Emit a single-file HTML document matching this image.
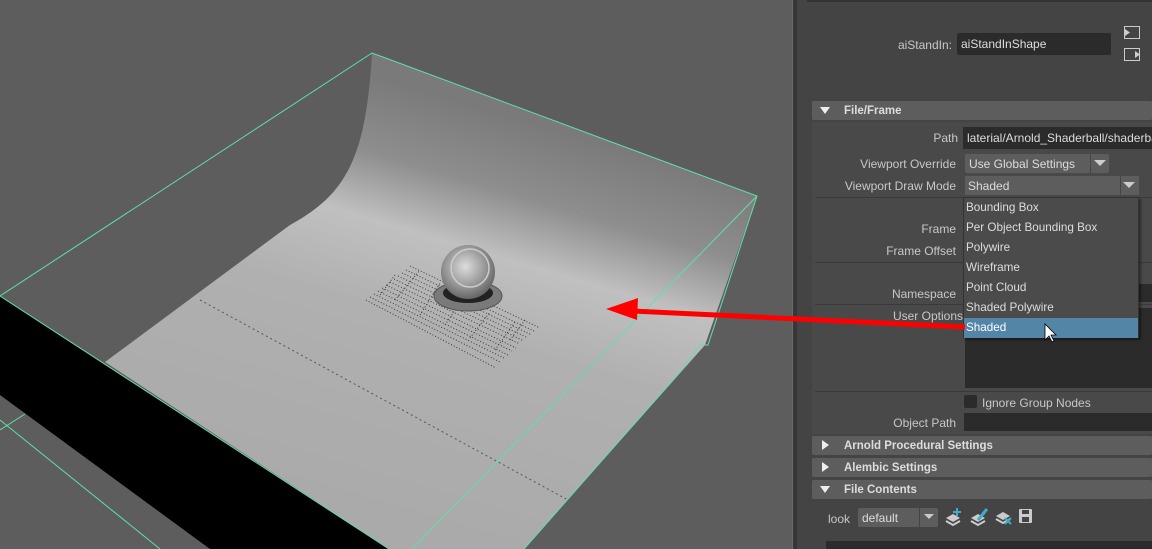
<!DOCTYPE html>
<html><head><style>
*{margin:0;padding:0;box-sizing:border-box}
body{width:1152px;height:549px;overflow:hidden;background:#444;font-family:"Liberation Sans",sans-serif;font-size:12px;color:#ccc;position:relative}
.a{position:absolute}
.lbl{position:absolute;text-align:right;color:#c8c8c8;font-size:12px}
.fld{position:absolute;background:#2b2b2b;color:#ddd;padding-left:4px;font-size:12px}
.hdr{position:absolute;left:812px;width:340px;height:19px;background:#5d5d5d;border-radius:2px;color:#ddd;font-weight:bold;font-size:11.5px;line-height:21px;padding-left:32px}
.tri{position:absolute;left:8px;top:6px;width:0;height:0;border-left:5px solid transparent;border-right:5px solid transparent;border-top:7px solid #eee}
.trr{position:absolute;left:10px;top:4px;width:0;height:0;border-top:5px solid transparent;border-bottom:5px solid transparent;border-left:7px solid #eee}
.dd div{height:20px;line-height:20px;padding-left:2px;color:#ddd;font-size:11.7px}
</style></head><body>
<svg class="a" style="left:0;top:0" width="792" height="549">
<defs>
<linearGradient id="g" x1="0.2" y1="1" x2="0.55" y2="0.1">
<stop offset="0" stop-color="#a8a8a8"/><stop offset="0.55" stop-color="#b0b0b0"/><stop offset="0.72" stop-color="#c0c0c0"/><stop offset="0.85" stop-color="#8e8e8e"/><stop offset="1" stop-color="#7a7a7a"/>
</linearGradient>
<radialGradient id="s" cx="0.45" cy="0.4" r="0.6"><stop offset="0" stop-color="#ddd"/><stop offset="0.6" stop-color="#999"/><stop offset="1" stop-color="#666"/></radialGradient>
</defs>
<rect width="792" height="549" fill="#5d5d5d"/>
<path d="M372,53 C366,160 345,195 290,225 L105,362 L389,549 L524,549 L705,345 L757,196 Z" fill="url(#g)"/>
<path d="M0,296 L389,549 L210,549 L0,395 Z" fill="#000"/>
<g stroke="#5fe0a8" stroke-width="1" fill="none">
<path d="M0,296 L372,53 L757,196 L708,345 L700,345 L680,372 L524,549"/>
<path d="M0,296 L389,549"/>
<path d="M0,420 L160,549"/>
<path d="M0,430 L25,414"/>
<path d="M757,196 L412,549"/>
</g>
<path d="M200,300 L568,500" stroke="#555" stroke-dasharray="2,3" stroke-width="1"/>
<g stroke="#3a3a3a" stroke-width="1" stroke-dasharray="1,2" fill="none">
<path d="M410,266 L540,328 M406,270 L536,332 M402,273 L532,335 M398,276 L528,338 M394,279 L524,341 M390,282 L520,344 M386,285 L516,348 M382,288 L512,351 M378,291 L508,355 M374,294 L504,358 M370,297 L500,362 M366,300 L496,368"/>
<path d="M395,300 L420,270 M420,315 L440,283 M445,325 L462,300 M470,338 L490,312 M495,350 L515,322 M380,295 L395,275 M510,340 L525,320"/>
</g>
<ellipse cx="468" cy="296" rx="34" ry="15" fill="#7a7a7a" stroke="#555"/>
<ellipse cx="468" cy="293" rx="25" ry="10" fill="#222"/>
<circle cx="468" cy="272" r="27" fill="url(#s)"/>
<circle cx="470" cy="268" r="19" fill="none" stroke="#ccc" stroke-width="1.5"/>
</svg>
<div class="a" style="left:792px;top:0;width:1px;height:549px;background:#6a6a6a"></div>
<div class="a" style="left:793px;top:0;width:4px;height:549px;background:#373737"></div>
<div class="a" style="left:807px;top:0;width:345px;height:2px;background:#333"></div>
<div class="lbl" style="left:850px;width:102px;top:38px">aiStandIn:</div>
<div class="fld" style="left:957px;top:33px;width:154px;height:22px;line-height:23px;border-radius:2px">aiStandInShape</div>
<svg class="a" style="left:1122px;top:22px" width="22" height="42"><g stroke="#ccc" fill="none"><rect x="2.5" y="4.5" width="15" height="12"/><rect x="2.5" y="26.5" width="15" height="12"/></g><path d="M3,7 L8,10.5 L3,14Z M13,29 L18,32.5 L13,36Z" fill="#ccc"/></svg>
<div class="hdr" style="top:101px"><div class="tri"></div>File/Frame</div>
<div class="a" style="left:812px;top:122px;width:340px;height:312px;background:#494949"></div>
<div class="lbl" style="left:830px;width:128px;top:131px">Path</div>
<div class="fld" style="left:963px;top:127px;width:189px;height:22px;line-height:23px">laterial/Arnold_Shaderball/shaderba</div>
<div class="lbl" style="left:830px;width:126px;top:157px">Viewport Override</div>
<div class="a" style="left:965px;top:154px;width:144px;height:19px;background:#5d5d5d;border-radius:2px;color:#ddd;line-height:20px;padding-left:4px">Use Global Settings</div>
<div class="a" style="left:1090px;top:154px;width:1px;height:19px;background:#444"></div>
<div class="a" style="left:1094px;top:160px;border-left:6px solid transparent;border-right:6px solid transparent;border-top:6px solid #ccc"></div>
<div class="lbl" style="left:830px;width:126px;top:179px">Viewport Draw Mode</div>
<div class="a" style="left:965px;top:176px;width:174px;height:19px;background:#5d5d5d;color:#ddd;line-height:21px;padding-left:3px">Shaded</div>
<div class="a" style="left:1120px;top:176px;width:1px;height:19px;background:#444"></div>
<div class="a" style="left:1123px;top:182px;border-left:6px solid transparent;border-right:6px solid transparent;border-top:6px solid #ccc"></div>
<div class="a" style="left:815px;top:197px;width:337px;height:1px;background:#3a3a3a"></div>
<div class="lbl" style="left:830px;width:126px;top:222px">Frame</div>
<div class="lbl" style="left:830px;width:126px;top:244px">Frame Offset</div>
<div class="a" style="left:815px;top:262px;width:337px;height:1px;background:#3a3a3a"></div>
<div class="lbl" style="left:830px;width:126px;top:287px">Namespace</div>
<div class="fld" style="left:1138px;top:284px;width:14px;height:18px"></div>
<div class="a" style="left:815px;top:304px;width:337px;height:1px;background:#3a3a3a"></div>
<div class="lbl" style="left:830px;width:133px;top:309px">User Options</div>
<div class="fld" style="left:965px;top:308px;width:187px;height:80px"></div>
<div class="a" style="left:815px;top:391px;width:337px;height:1px;background:#3a3a3a"></div>
<div class="a" style="left:964px;top:395px;width:13px;height:13px;background:#2b2b2b;border-radius:2px"></div>
<div class="a" style="left:982px;top:396px;color:#c8c8c8">Ignore Group Nodes</div>
<div class="lbl" style="left:830px;width:126px;top:416px">Object Path</div>
<div class="fld" style="left:964px;top:413px;width:188px;height:18px"></div>
<div class="hdr" style="top:436px"><div class="trr"></div>Arnold Procedural Settings</div>
<div class="hdr" style="top:458px"><div class="trr"></div>Alembic Settings</div>
<div class="hdr" style="top:480px"><div class="tri"></div>File Contents</div>
<div class="a" style="left:828px;top:512px;color:#c8c8c8">look</div>
<div class="a" style="left:858px;top:508px;width:80px;height:19px;background:#5d5d5d;border-radius:2px;color:#ddd;line-height:21px;padding-left:4px">default</div>
<div class="a" style="left:919px;top:508px;width:1px;height:19px;background:#444"></div>
<div class="a" style="left:924px;top:514px;border-left:5px solid transparent;border-right:5px solid transparent;border-top:5px solid #ccc"></div>
<svg class="a" style="left:944px;top:506px" width="95" height="22">
<g fill="#ccc"><path d="M2,12 L9,8 L16,12 L9,16Z"/><path d="M2,15 L9,19 L16,15" stroke="#ccc" fill="none" stroke-width="2"/>
<path d="M27,12 L34,8 L41,12 L34,16Z"/><path d="M27,15 L34,19 L41,15" stroke="#ccc" fill="none" stroke-width="2"/>
<path d="M52,10 L59,6 L66,10 L59,14Z"/><path d="M52,13 L59,17 L66,13" stroke="#ccc" fill="none" stroke-width="2"/>
<rect x="75" y="3" width="13" height="14" rx="1"/></g>
<rect x="78" y="4" width="7" height="4" fill="#444"/><rect x="78" y="11" width="7" height="5" fill="#444"/>
<path d="M13,2 V10 M9,6 H17" stroke="#4ac" stroke-width="2"/>
<path d="M34,14 L43,3" stroke="#4ac" stroke-width="3"/>
<path d="M61,12 L67,18 M67,12 L61,18" stroke="#4ac" stroke-width="2"/>
</svg>
<div class="a" style="left:826px;top:541px;width:326px;height:8px;background:#2b2b2b"></div>
<div class="a dd" style="left:963px;top:197px;width:176px;height:141px;background:#4b4b4b;border:1px solid #333;box-shadow:2px 2px 2px rgba(0,0,0,.4)">
<div>Bounding Box</div><div>Per Object Bounding Box</div><div>Polywire</div><div>Wireframe</div><div>Point Cloud</div><div>Shaded Polywire</div><div style="background:#5285a6;color:#fff">Shaded</div>
</div>
<svg class="a" style="left:0;top:0" width="1152" height="549">
<path d="M965,327 L632,311" stroke="#f00" stroke-width="5"/>
<path d="M606,309 L638,298 L637,320Z" fill="#f00"/>
<path d="M1045,324 L1045,340 L1049,336 L1052,342 L1054,341 L1051,335 L1056,335Z" fill="#fff" stroke="#000" stroke-width="0.8"/>
</svg>
</body></html>
